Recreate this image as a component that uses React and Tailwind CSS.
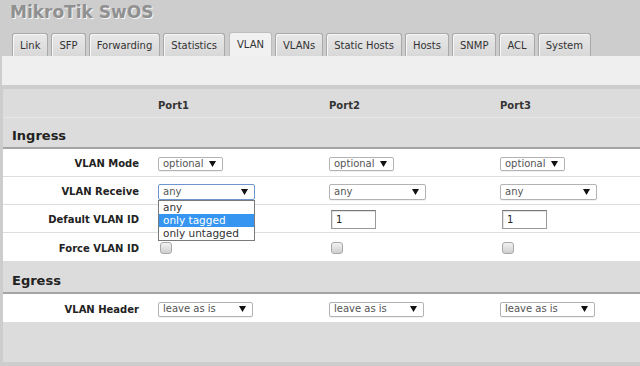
import clsx from "clsx";

const TABS = ["Link", "SFP", "Forwarding", "Statistics", "VLAN", "VLANs", "Static Hosts", "Hosts", "SNMP", "ACL", "System"];

function Arrow() {
  return (
    <svg width="7" height="6" viewBox="0 0 7 6" className="shrink-0">
      <polygon points="0,0 7,0 3.5,6" fill="#111" />
    </svg>
  );
}

function Select({ text, className, focused }) {
  return (
    <div
      className={clsx(
        "flex items-center justify-between bg-white border pl-[4px] pr-[6px] text-[10px] leading-none text-[#555] rounded-[2px]",
        focused ? "border-[#6f95d0]" : "border-[#b3b3b3] shadow-[0_1px_1px_rgba(0,0,0,0.06)]",
        className
      )}
    >
      <span>{text}</span>
      <Arrow />
    </div>
  );
}

function Input({ value = "1" }) {
  return (
    <div className="ml-[2px] w-[45px] h-[19px] bg-white border border-[#9a9a9a] border-t-[#777] shadow-[inset_1px_1px_1px_rgba(0,0,0,0.12)] flex items-center pl-[4px] text-[10px] text-[#222]">
      {value}
    </div>
  );
}

function Check() {
  return (
    <div className="ml-[2px] w-[12px] h-[12px] rounded-[3px] border border-[#a8a8a8] bg-gradient-to-b from-[#f2f2f2] to-[#cfcfcf]" />
  );
}

function Row({ label, children, last }) {
  return (
    <div
      className={clsx(
        "grid grid-cols-[155px_171px_171px_1fr] h-[28px] bg-white items-center pt-[2px]",
        !last && "border-b border-[#dedede]"
      )}
    >
      <div className="text-right pr-[19px] text-[10px] font-bold text-[#222]">{label}</div>
      {children}
    </div>
  );
}

function Section({ title, className }) {
  return (
    <div className={clsx("flex items-end pl-[9px] pb-[2px] border-b-2 border-[#a5a5a5] text-[13px] font-bold text-[#222]", className)}>
      {title}
    </div>
  );
}

export default function App() {
  return (
    <div className="w-[640px] h-[366px] overflow-hidden bg-[#cdcdcd] font-['DejaVu_Sans',sans-serif] flex flex-col">
      {/* title */}
      <div className="mt-[2px] pl-[10px] h-[20px] leading-[20px] text-[17px] font-bold text-[#909090] [text-shadow:1px_1px_0_#f4f4f4]">
        MikroTik SwOS
      </div>

      {/* tabs */}
      <div className="mt-[10px] h-[24px] flex items-end gap-[3px] pl-[12px]">
        {TABS.map((t) =>
          t === "VLAN" ? (
            <div
              key={t}
              className="h-[24px] px-[7px] flex items-center ml-[1px] rounded-t-[3px] border border-b-0 border-[#bdbdbd] bg-[#f1f1f1] text-[10px] text-[#333]"
            >
              {t}
            </div>
          ) : (
            <div
              key={t}
              className="h-[23px] px-[7px] flex items-center rounded-t-[3px] border border-b-0 border-[#a9a9a9] bg-gradient-to-b from-[#e8e8e8] to-[#d8d8d8] shadow-[inset_1px_1px_0_#f7f7f7] text-[10px] text-[#333]"
            >
              {t}
            </div>
          )
        )}
      </div>

      {/* toolbar panel */}
      <div className="ml-[2px] h-[29px] bg-[#efefef]" />

      {/* table */}
      <div className="mt-[4px] ml-[3px] h-[273px] bg-[#dcdcdc] flex flex-col">
        <div className="grid grid-cols-[155px_171px_171px_1fr] h-[29px] items-center pt-[4px] border-b border-[#e6e6e6] text-[10px] font-bold text-[#333]">
          <div />
          <div>Port1</div>
          <div>Port2</div>
          <div>Port3</div>
        </div>

        <Section title="Ingress" className="h-[31px]" />

        <Row label="VLAN Mode">
          <div><Select text="optional" className="w-[65px] h-[14px]" /></div>
          <div><Select text="optional" className="w-[65px] h-[14px]" /></div>
          <div><Select text="optional" className="w-[65px] h-[14px]" /></div>
        </Row>

        <Row label="VLAN Receive">
          <div className="relative">
            <Select text="any" className="w-[97px] h-[16px]" focused />
            <div className="absolute left-0 top-full z-10 w-[97px] bg-white border border-[#7a7a7a] text-[10.5px] leading-none text-[#333]">
              <div className="h-[13px] flex items-center pl-[4px]">any</div>
              <div className="h-[13px] flex items-center pl-[4px] bg-[#3595f0] text-white">only tagged</div>
              <div className="h-[13px] flex items-center pl-[4px]">only untagged</div>
            </div>
          </div>
          <div><Select text="any" className="w-[97px] h-[16px]" /></div>
          <div><Select text="any" className="w-[97px] h-[16px]" /></div>
        </Row>

        <Row label="Default VLAN ID">
          {/* Port1 input sits under the open list */}
          <div><Input value="" /></div>
          <div><Input /></div>
          <div><Input /></div>
        </Row>

        <Row label="Force VLAN ID" last>
          <div><Check /></div>
          <div><Check /></div>
          <div><Check /></div>
        </Row>

        <Section title="Egress" className="h-[33px]" />

        <Row label="VLAN Header" last>
          <div><Select text="leave as is" className="w-[95px] h-[15px]" /></div>
          <div><Select text="leave as is" className="w-[95px] h-[15px]" /></div>
          <div><Select text="leave as is" className="w-[95px] h-[15px]" /></div>
        </Row>

        <div className="flex-1" />
      </div>
    </div>
  );
}
